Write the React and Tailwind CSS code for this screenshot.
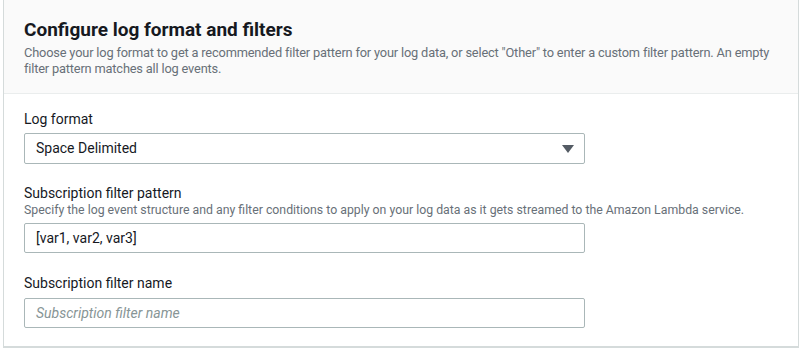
export default function App() {
  return (
    <div className="w-[800px] h-[350px] bg-white pl-[3px] pr-[1px]" style={{ fontFamily: "Roboto, 'Liberation Sans', sans-serif" }}>
      <div className="border-x border-b-2 border-[#d5dbdb] bg-white h-[348px]">
        <div className="bg-[#fafafa] border-b border-[#eaeded] h-[94px] px-[20px] pt-[18px]">
          <h2 className="text-[19px] leading-[24px] font-bold text-[#16191f]">Configure log format and filters</h2>
          <p className="text-[12.8px] leading-[16px] tracking-[-0.17px] text-[#687078] mt-[3px] whitespace-nowrap">
            Choose your log format to get a recommended filter pattern for your log data, or select "Other" to enter a custom filter pattern. An empty
            <br />
            filter pattern matches all log events.
          </p>
        </div>
        <div className="px-[20px] pt-[16px]">
          <div className="text-[14px] leading-[18px] text-[#16191f]">Log format</div>
          <div className="mt-[5px] w-[561px] h-[31px] border border-[#aab7b8] rounded-[2px] flex items-center justify-between pl-[11px] pr-[10px] text-[14px] text-[#16191f]">
            <span>Space Delimited</span>
            <svg width="12" height="8" viewBox="0 0 12 8"><path d="M0 0h12L6 8z" fill="#545b64" /></svg>
          </div>
          <div className="mt-[20px] text-[14px] leading-[18px] text-[#16191f]">Subscription filter pattern</div>
          <div className="text-[12.3px] leading-[16px] text-[#687078]">Specify the log event structure and any filter conditions to apply on your log data as it gets streamed to the Amazon Lambda service.</div>
          <div className="mt-[5px] w-[561px] h-[30px] border border-[#aab7b8] rounded-[2px] flex items-center pl-[11px] text-[14px] text-[#16191f]">[var1, var2, var3]</div>
          <div className="mt-[21px] text-[14px] leading-[18px] text-[#16191f]">Subscription filter name</div>
          <div className="mt-[6px] w-[561px] h-[30px] border border-[#aab7b8] rounded-[2px] flex items-center pl-[11px] text-[14px] italic text-[#879596]">Subscription filter name</div>
        </div>
      </div>
    </div>
  );
}
